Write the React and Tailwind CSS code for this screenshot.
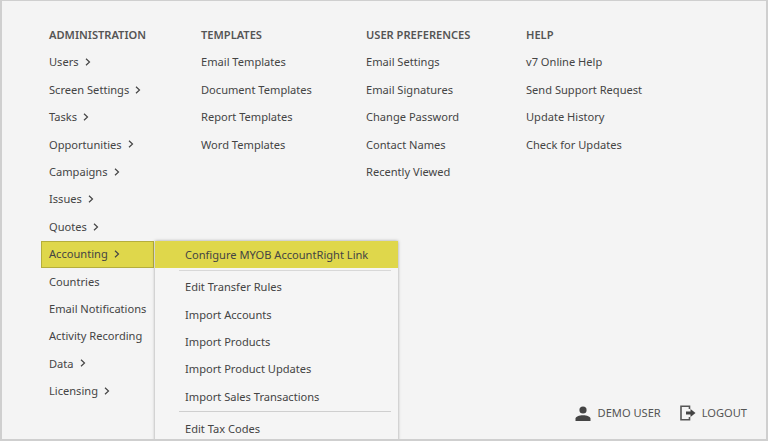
import React from 'react'

const columns = [
  {
    title: 'ADMINISTRATION',
    width: 'w-[152px]',
    items: [
      { label: 'Users', more: true },
      { label: 'Screen Settings', more: true },
      { label: 'Tasks', more: true },
      { label: 'Opportunities', more: true },
      { label: 'Campaigns', more: true },
      { label: 'Issues', more: true },
      { label: 'Quotes', more: true },
      { label: 'Accounting', more: true, active: true },
      { label: 'Countries' },
      { label: 'Email Notifications' },
      { label: 'Activity Recording' },
      { label: 'Data', more: true },
      { label: 'Licensing', more: true },
    ],
  },
  {
    title: 'TEMPLATES',
    width: 'w-[165px]',
    items: [{ label: 'Email Templates' }, { label: 'Document Templates' }, { label: 'Report Templates' }, { label: 'Word Templates' }],
  },
  {
    title: 'USER PREFERENCES',
    width: 'w-[160px]',
    items: [
      { label: 'Email Settings' },
      { label: 'Email Signatures' },
      { label: 'Change Password' },
      { label: 'Contact Names' },
      { label: 'Recently Viewed' },
    ],
  },
  {
    title: 'HELP',
    width: 'w-[160px]',
    items: [{ label: 'v7 Online Help' }, { label: 'Send Support Request' }, { label: 'Update History' }, { label: 'Check for Updates' }],
  },
]

const Chevron = () => (
  <svg width="6" height="8" viewBox="0 0 6 8" fill="none" stroke="currentColor" strokeWidth="1.2" className="ml-[6px] mt-[-1px] shrink-0">
    <path d="M1 .7 4.5 4 1 7.3" />
  </svg>
)

const Flyout = () => (
  <div className="absolute left-[106px] top-0 z-10 w-[243px] h-[201px] overflow-hidden bg-[#f5f5f5] shadow-[0_0_3px_rgba(0,0,0,0.35)]">
    <div className="flex h-[27px] items-center bg-[#dfd74b] pl-[30px] pt-[2px]">Configure MYOB AccountRight Link</div>
    <div className="ml-6 mr-[7px] mt-[2px] h-[1px] bg-[#d8d8d8]" />
    <div className="mt-[3px]">
      {['Edit Transfer Rules', 'Import Accounts', 'Import Products', 'Import Product Updates', 'Import Sales Transactions'].map(label => (
        <div key={label} className="flex h-[27.4px] items-center pl-[30px]">{label}</div>
      ))}
    </div>
    <div className="ml-6 mr-[7px] h-[1px] bg-[#cfcfcf]" />
    <div className="flex h-[35px] items-center pl-[30px]">Edit Tax Codes</div>
  </div>
)

const Row = ({ item }) => (
  <div className="relative h-[27.4px]">
    {item.active && (
      <div className="absolute left-[-8px] top-[0.5px] h-[27px] w-[113px] border border-[#b5ae3c] bg-[#dfd74b]" />
    )}
    <div className="relative flex h-full items-center">
      <span>{item.label}</span>
      {item.more && <Chevron />}
    </div>
    {item.active && <Flyout />}
  </div>
)

export default function App() {
  return (
    <div className="flex h-[441px] w-[768px] flex-col overflow-hidden border-t border-l-2 border-r-2 border-b-2 border-[#cfcfcf] bg-[#f4f4f4] font-['Noto_Sans',sans-serif] text-[11.1px] text-[#444444]">
      <div className="flex pl-[47px] pt-[25px]">
        {columns.map(col => (
          <div key={col.title} className={col.width}>
            <div className="mb-[4px] flex h-[19px] items-center font-semibold text-[#555555]">{col.title}</div>
            {col.items.map(item => <Row key={item.label} item={item} />)}
          </div>
        ))}
      </div>
      <div className="mt-auto mb-[20px] flex items-center justify-end pr-[19px] text-[#555555]">
        <svg width="16" height="15" viewBox="0 0 16 15" fill="#444444" className="mr-[7px]">
          <circle cx="8" cy="4" r="3.6" />
          <path d="M.5 15v-2.4c0-2 3.6-3.4 7.5-3.4s7.5 1.4 7.5 3.4V15z" />
        </svg>
        <span>DEMO USER</span>
        <svg width="16" height="16" viewBox="0 0 16 16" fill="none" className="ml-[19px] mr-[6px]">
          <path d="M9.5 4V1.2H1v13.6h8.5V12" stroke="#555555" strokeWidth="1.6" />
          <path d="M6 6.6h4.5V4l5 4-5 4V9.4H6z" fill="#444444" />
        </svg>
        <span>LOGOUT</span>
      </div>
    </div>
  )
}
